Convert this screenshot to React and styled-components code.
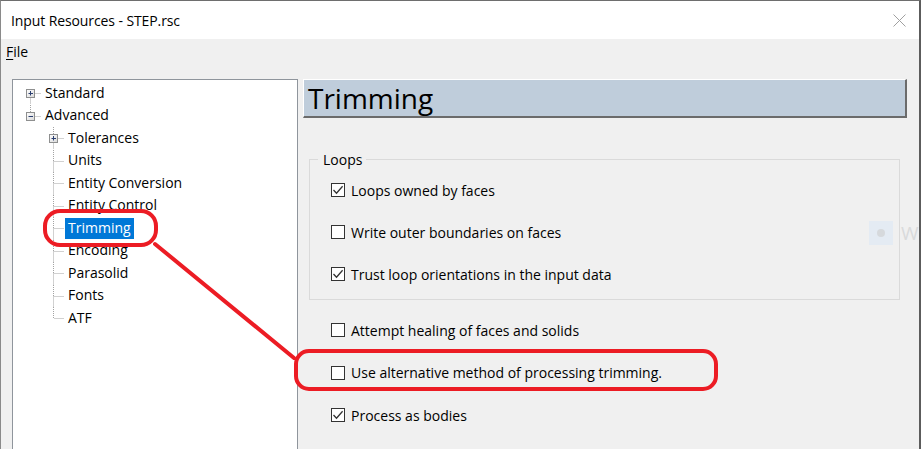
import React from "react";
import styled, { createGlobalStyle } from "styled-components";

const Global = createGlobalStyle`
  html, body { margin: 0; padding: 0; background: #f0f0f0; }
  body { font-family: "Open Sans", "Noto Sans", sans-serif; font-size: 14px; color: #000; }
  * { box-sizing: border-box; }
`;

const Window = styled.div`
  position: relative;
  width: 921px;
  height: 449px;
  overflow: hidden;
  background: #f0f0f0;
  border-top: 1px solid #6e6e6e;
  border-left: 1px solid #8a8a8a;
  border-right: 2px solid #5c5c5c;
  display: flex;
  flex-direction: column;
`;

const TitleBar = styled.div`
  height: 38px;
  flex: none;
  background: #ffffff;
  display: flex;
  align-items: center;
  justify-content: space-between;
  padding: 0 13px 0 10px;
`;

const Title = styled.span`
  font-size: 14px;
  color: #000;
  letter-spacing: -0.1px;
`;

const MenuBar = styled.div`
  height: 25px;
  flex: none;
  display: flex;
  align-items: center;
  padding-left: 5px;
`;

const MenuItem = styled.span`
  font-size: 14px;
  u { text-decoration: underline; text-underline-offset: 2px; }
`;

const Body = styled.div`
  flex: 1;
  display: flex;
  padding: 15px 0 0 11px;
  min-height: 0;
`;

const TreePanel = styled.div`
  width: 286px;
  flex: none;
  background: #ffffff;
  border: 1px solid #8f959c;
  border-bottom: none;
  padding: 2px 0 0 6px;
`;

const TreeRow = styled.div`
  height: 22.5px;
  display: flex;
  align-items: center;
  padding-left: ${(p) => p.$level * 23}px;
`;

const TreeLabel = styled.span`
  height: 21px;
  line-height: 20px;
  padding: 0 3px;
  white-space: nowrap;
  color: ${(p) => (p.$selected ? "#ffffff" : "#000000")};
  background: ${(p) => (p.$selected ? "#0078d7" : "transparent")};
`;

const RightPanel = styled.div`
  width: 604px;
  flex: none;
  margin-left: 5px;
  display: flex;
  flex-direction: column;
`;

const Header = styled.div`
  height: 39px;
  background: #bfcddb;
  border-top: 1px solid #ffffff;
  border-left: 1px solid #ffffff;
  border-right: 2px solid #6b6b6b;
  border-bottom: 2px solid #6b6b6b;
  display: flex;
  align-items: center;
  padding-left: 4px;
  font-size: 28px;
  line-height: 1;
  color: #000;
`;

const Group = styled.fieldset`
  margin: 32px 7px 0 6px;
  padding: 0 0 4px 21px;
  border: 1px solid #dadada;
  min-width: 0;
`;

const Legend = styled.legend`
  margin-left: -13px;
  padding: 0 4px 0 5px;
  font-size: 14px;
  line-height: 19px;
`;

const OptionList = styled.div`
  display: flex;
  flex-direction: column;
  padding: ${(p) => (p.$outer ? "9px 0 0 28px" : "0")};
`;

const OptionRow = styled.label`
  height: ${(p) => (p.$outer ? "42.5px" : "42px")};
  display: flex;
  align-items: center;
  gap: 6px;
  white-space: nowrap;
`;

const Box = styled.span`
  width: 14px;
  height: 14px;
  flex: none;
  border: 1px solid #333333;
  background: #ffffff;
  display: flex;
  align-items: center;
  justify-content: center;
`;

const Ghost = styled.div`
  position: absolute;
  left: 868px;
  top: 219px;
  display: flex;
  align-items: center;
  gap: 8px;
  pointer-events: none;
`;

const GhostIcon = styled.div`
  width: 24px;
  height: 24px;
  background: #e4ebf3;
  display: flex;
  align-items: center;
  justify-content: center;
  &::after {
    content: "";
    width: 8px;
    height: 8px;
    border-radius: 50%;
    background: #d6d9dc;
  }
`;

const GhostText = styled.span`
  font-size: 19px;
  color: #d9dadb;
`;

const Overlay = styled.svg`
  position: absolute;
  left: 0;
  top: 0;
  pointer-events: none;
`;

const tree = [
  { label: "Standard", level: 0, box: "plus", top: false, bottom: true },
  { label: "Advanced", level: 0, box: "minus", top: true, bottom: false },
  { label: "Tolerances", level: 1, box: "plus", top: true, bottom: true },
  { label: "Units", level: 1, top: true, bottom: true },
  { label: "Entity Conversion", level: 1, top: true, bottom: true },
  { label: "Entity Control", level: 1, top: true, bottom: true },
  { label: "Trimming", level: 1, top: true, bottom: true, selected: true },
  { label: "Encoding", level: 1, top: true, bottom: true },
  { label: "Parasolid", level: 1, top: true, bottom: true },
  { label: "Fonts", level: 1, top: true, bottom: true },
  { label: "ATF", level: 1, top: true, bottom: false },
];

function Connector({ top, bottom, box }) {
  const w = 23;
  const h = 22.5;
  const cx = 11.5;
  const cy = 11.5;
  const dot = { stroke: "#a3a3a3", strokeWidth: 1, strokeDasharray: "1 1" };
  return (
    <svg width={w} height={h} viewBox={`0 0 ${w} ${h}`} style={{ flex: "none", display: "block" }}>
      <defs>
        <linearGradient id="tbg" x1="0" y1="0" x2="1" y2="1">
          <stop offset="0" stopColor="#ffffff" />
          <stop offset="1" stopColor="#d8d8d8" />
        </linearGradient>
      </defs>
      {top && <line x1={cx} y1={0} x2={cx} y2={box ? cy - 4 : cy} {...dot} />}
      {bottom && <line x1={cx} y1={box ? cy + 5 : cy} x2={cx} y2={h} {...dot} />}
      <line x1={box ? cx + 5 : cx + 1} y1={cy} x2={w - 1} y2={cy} {...dot} />
      {box && (
        <g>
          <rect x={cx - 4} y={cy - 4} width={8} height={8} fill="url(#tbg)" stroke="#8e8f8f" strokeWidth={1} />
          <line x1={cx - 2} y1={cy} x2={cx + 2.5} y2={cy} stroke="#2b3f70" strokeWidth={1} />
          {box === "plus" && <line x1={cx} y1={cy - 2.5} x2={cx} y2={cy + 2} stroke="#2b3f70" strokeWidth={1} />}
        </g>
      )}
    </svg>
  );
}

function Check({ checked }) {
  return (
    <Box>
      {checked && (
        <svg width="12" height="12" viewBox="0 0 12 12">
          <path d="M1.5 6 L4.5 9.2 L10.6 2.2" fill="none" stroke="#333333" strokeWidth="1.3" />
        </svg>
      )}
    </Box>
  );
}

function Option({ checked, children, outer }) {
  return (
    <OptionRow $outer={outer}>
      <Check checked={checked} />
      <span>{children}</span>
    </OptionRow>
  );
}

export default function App() {
  return (
    <>
      <Global />
      <Window>
        <TitleBar>
          <Title>Input Resources - STEP.rsc</Title>
          <svg width="13" height="13" viewBox="0 0 13 13">
            <path d="M0.5 0.5 L12.5 12.5 M12.5 0.5 L0.5 12.5" stroke="#a0a0a0" strokeWidth="1" />
          </svg>
        </TitleBar>
        <MenuBar>
          <MenuItem>
            <u>F</u>ile
          </MenuItem>
        </MenuBar>
        <Body>
          <TreePanel>
            {tree.map((n) => (
              <TreeRow key={n.label} $level={n.level}>
                <Connector top={n.top} bottom={n.bottom} box={n.box} />
                <TreeLabel $selected={n.selected}>{n.label}</TreeLabel>
              </TreeRow>
            ))}
          </TreePanel>
          <RightPanel>
            <Header>Trimming</Header>
            <Group>
              <Legend>Loops</Legend>
              <OptionList>
                <Option checked>Loops owned by faces</Option>
                <Option>Write outer boundaries on faces</Option>
                <Option checked>Trust loop orientations in the input data</Option>
              </OptionList>
            </Group>
            <OptionList $outer>
              <Option outer>Attempt healing of faces and solids</Option>
              <Option outer>Use alternative method of processing trimming.</Option>
              <Option outer checked>Process as bodies</Option>
            </OptionList>
          </RightPanel>
        </Body>
        <Ghost>
          <GhostIcon />
          <GhostText>Wi</GhostText>
        </Ghost>
        <Overlay width="921" height="449" viewBox="0 0 921 449">
          <g fill="none" stroke="#ec1c24" strokeWidth="4" strokeLinejoin="round" strokeLinecap="round">
            <rect x="44" y="210" width="111" height="34" rx="15" />
            <line x1="154" y1="243" x2="293" y2="357" />
            <rect x="295" y="350" width="420" height="38" rx="13" />
          </g>
        </Overlay>
      </Window>
    </>
  );
}
